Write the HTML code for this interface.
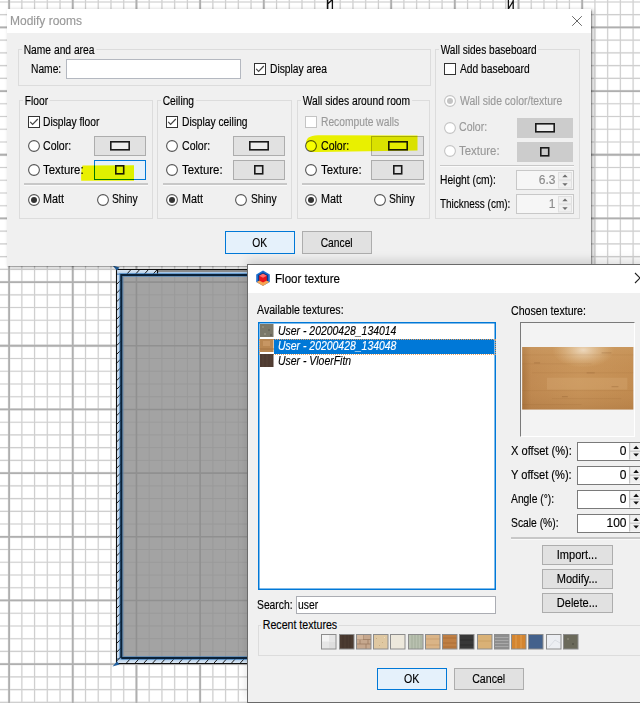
<!DOCTYPE html>
<html><head><meta charset="utf-8"><style>
html,body{margin:0;padding:0}
body{width:640px;height:703px;position:relative;overflow:hidden;background:#fff;font-family:"Liberation Sans",sans-serif;font-size:12px}
.b{position:absolute;box-sizing:content-box}
.t{-webkit-text-stroke:0.15px currentColor;position:absolute;white-space:nowrap;line-height:14px;transform-origin:0 0;font-size:12px;color:#000}
svg.b{overflow:visible}
</style></head><body>
<div class="b" style="left:0;top:0;width:640px;height:703px;"><svg width="640" height="703" viewBox="0 0 640 703" style="display:block"><path d="M21.84 0V703M34.57 0V703M47.30 0V703M60.04 0V703M85.51 0V703M98.24 0V703M110.98 0V703M123.71 0V703M149.18 0V703M161.92 0V703M174.66 0V703M187.39 0V703M212.86 0V703M225.59 0V703M238.33 0V703M251.06 0V703M276.54 0V703M289.27 0V703M302.00 0V703M314.74 0V703M340.21 0V703M352.94 0V703M365.68 0V703M378.42 0V703M403.88 0V703M416.62 0V703M429.36 0V703M442.09 0V703M467.56 0V703M480.30 0V703M493.03 0V703M505.76 0V703M531.24 0V703M543.97 0V703M556.71 0V703M569.44 0V703M594.91 0V703M607.64 0V703M620.38 0V703M633.12 0V703M0 1.93H640M0 14.66H640M0 40.13H640M0 52.87H640M0 65.60H640M0 78.34H640M0 103.81H640M0 116.54H640M0 129.28H640M0 142.01H640M0 167.48H640M0 180.22H640M0 192.96H640M0 205.69H640M0 231.16H640M0 243.90H640M0 256.63H640M0 269.36H640M0 294.83H640M0 307.57H640M0 320.30H640M0 333.04H640M0 358.51H640M0 371.24H640M0 383.98H640M0 396.71H640M0 422.18H640M0 434.92H640M0 447.65H640M0 460.39H640M0 485.86H640M0 498.59H640M0 511.33H640M0 524.06H640M0 549.53H640M0 562.27H640M0 575.00H640M0 587.74H640M0 613.21H640M0 625.94H640M0 638.68H640M0 651.41H640M0 676.88H640M0 689.62H640M0 702.35H640" stroke="#f6f6f6" stroke-width="2.0" fill="none"/><path d="M9.10 0V703M72.77 0V703M136.45 0V703M200.12 0V703M263.80 0V703M327.48 0V703M391.15 0V703M454.82 0V703M518.50 0V703M582.17 0V703M0 27.40H640M0 91.07H640M0 154.75H640M0 218.42H640M0 282.10H640M0 345.77H640M0 409.45H640M0 473.12H640M0 536.80H640M0 600.47H640M0 664.15H640" stroke="#ececec" stroke-width="2.8" fill="none"/><path d="M21.84 0V703M34.57 0V703M47.30 0V703M60.04 0V703M85.51 0V703M98.24 0V703M110.98 0V703M123.71 0V703M149.18 0V703M161.92 0V703M174.66 0V703M187.39 0V703M212.86 0V703M225.59 0V703M238.33 0V703M251.06 0V703M276.54 0V703M289.27 0V703M302.00 0V703M314.74 0V703M340.21 0V703M352.94 0V703M365.68 0V703M378.42 0V703M403.88 0V703M416.62 0V703M429.36 0V703M442.09 0V703M467.56 0V703M480.30 0V703M493.03 0V703M505.76 0V703M531.24 0V703M543.97 0V703M556.71 0V703M569.44 0V703M594.91 0V703M607.64 0V703M620.38 0V703M633.12 0V703M0 1.93H640M0 14.66H640M0 40.13H640M0 52.87H640M0 65.60H640M0 78.34H640M0 103.81H640M0 116.54H640M0 129.28H640M0 142.01H640M0 167.48H640M0 180.22H640M0 192.96H640M0 205.69H640M0 231.16H640M0 243.90H640M0 256.63H640M0 269.36H640M0 294.83H640M0 307.57H640M0 320.30H640M0 333.04H640M0 358.51H640M0 371.24H640M0 383.98H640M0 396.71H640M0 422.18H640M0 434.92H640M0 447.65H640M0 460.39H640M0 485.86H640M0 498.59H640M0 511.33H640M0 524.06H640M0 549.53H640M0 562.27H640M0 575.00H640M0 587.74H640M0 613.21H640M0 625.94H640M0 638.68H640M0 651.41H640M0 676.88H640M0 689.62H640M0 702.35H640" stroke="#cfcfcf" stroke-width="1.1" fill="none"/><path d="M9.10 0V703M72.77 0V703M136.45 0V703M200.12 0V703M263.80 0V703M327.48 0V703M391.15 0V703M454.82 0V703M518.50 0V703M582.17 0V703M0 27.40H640M0 91.07H640M0 154.75H640M0 218.42H640M0 282.10H640M0 345.77H640M0 409.45H640M0 473.12H640M0 536.80H640M0 600.47H640M0 664.15H640" stroke="#afafaf" stroke-width="1.8" fill="none"/><rect x="121" y="275" width="200" height="383" fill="#a3a3a3"/><g><path d="M123.71 275V658M149.18 275V658M161.92 275V658M174.66 275V658M187.39 275V658M212.86 275V658M225.59 275V658M238.33 275V658M251.06 275V658M276.54 275V658M289.27 275V658M302.00 275V658M314.74 275V658M121 294.83H321M121 307.57H321M121 320.30H321M121 333.04H321M121 358.51H321M121 371.24H321M121 383.98H321M121 396.71H321M121 422.18H321M121 434.92H321M121 447.65H321M121 460.39H321M121 485.86H321M121 498.59H321M121 511.33H321M121 524.06H321M121 549.53H321M121 562.27H321M121 575.00H321M121 587.74H321M121 613.21H321M121 625.94H321M121 638.68H321M121 651.41H321" stroke="#9a9a9a" stroke-width="1.0" fill="none"/><path d="M136.45 275V658M200.12 275V658M263.80 275V658M121 282.10H321M121 345.77H321M121 409.45H321M121 473.12H321M121 536.80H321M121 600.47H321" stroke="#909090" stroke-width="1.6" fill="none"/></g><defs><linearGradient id="wl" x1="0" y1="0" x2="1" y2="0"><stop offset="0" stop-color="#e2ecf6"/><stop offset="0.55" stop-color="#c0d6ec"/><stop offset="1" stop-color="#5a8cc0"/></linearGradient><linearGradient id="wb" x1="0" y1="1" x2="0" y2="0"><stop offset="0" stop-color="#e2ecf6"/><stop offset="0.55" stop-color="#c0d6ec"/><stop offset="1" stop-color="#5a8cc0"/></linearGradient><linearGradient id="wt" x1="0" y1="0" x2="0" y2="1"><stop offset="0" stop-color="#e2ecf6"/><stop offset="0.55" stop-color="#c0d6ec"/><stop offset="1" stop-color="#5a8cc0"/></linearGradient></defs><rect x="116.5" y="269.5" width="4.8" height="394" fill="url(#wl)"/><rect x="116.5" y="658" width="140.5" height="5.5" fill="url(#wb)"/><rect x="116.5" y="269.5" width="41" height="5.5" fill="url(#wt)"/><rect x="157.5" y="269.5" width="100" height="2.5" fill="#8c8c8c"/><rect x="157.5" y="272" width="100" height="2.5" fill="#a8c6e4"/><line x1="116.5" y1="284.40" x2="121.5" y2="279.40" stroke="#1a1a1a" stroke-width="1"/><line x1="116.5" y1="293.16" x2="121.5" y2="288.16" stroke="#1a1a1a" stroke-width="1"/><line x1="116.5" y1="301.92" x2="121.5" y2="296.92" stroke="#1a1a1a" stroke-width="1"/><line x1="116.5" y1="310.68" x2="121.5" y2="305.68" stroke="#1a1a1a" stroke-width="1"/><line x1="116.5" y1="319.44" x2="121.5" y2="314.44" stroke="#1a1a1a" stroke-width="1"/><line x1="116.5" y1="328.20" x2="121.5" y2="323.20" stroke="#1a1a1a" stroke-width="1"/><line x1="116.5" y1="336.96" x2="121.5" y2="331.96" stroke="#1a1a1a" stroke-width="1"/><line x1="116.5" y1="345.72" x2="121.5" y2="340.72" stroke="#1a1a1a" stroke-width="1"/><line x1="116.5" y1="354.48" x2="121.5" y2="349.48" stroke="#1a1a1a" stroke-width="1"/><line x1="116.5" y1="363.24" x2="121.5" y2="358.24" stroke="#1a1a1a" stroke-width="1"/><line x1="116.5" y1="372.00" x2="121.5" y2="367.00" stroke="#1a1a1a" stroke-width="1"/><line x1="116.5" y1="380.76" x2="121.5" y2="375.76" stroke="#1a1a1a" stroke-width="1"/><line x1="116.5" y1="389.52" x2="121.5" y2="384.52" stroke="#1a1a1a" stroke-width="1"/><line x1="116.5" y1="398.28" x2="121.5" y2="393.28" stroke="#1a1a1a" stroke-width="1"/><line x1="116.5" y1="407.04" x2="121.5" y2="402.04" stroke="#1a1a1a" stroke-width="1"/><line x1="116.5" y1="415.80" x2="121.5" y2="410.80" stroke="#1a1a1a" stroke-width="1"/><line x1="116.5" y1="424.56" x2="121.5" y2="419.56" stroke="#1a1a1a" stroke-width="1"/><line x1="116.5" y1="433.32" x2="121.5" y2="428.32" stroke="#1a1a1a" stroke-width="1"/><line x1="116.5" y1="442.08" x2="121.5" y2="437.08" stroke="#1a1a1a" stroke-width="1"/><line x1="116.5" y1="450.84" x2="121.5" y2="445.84" stroke="#1a1a1a" stroke-width="1"/><line x1="116.5" y1="459.60" x2="121.5" y2="454.60" stroke="#1a1a1a" stroke-width="1"/><line x1="116.5" y1="468.36" x2="121.5" y2="463.36" stroke="#1a1a1a" stroke-width="1"/><line x1="116.5" y1="477.12" x2="121.5" y2="472.12" stroke="#1a1a1a" stroke-width="1"/><line x1="116.5" y1="485.88" x2="121.5" y2="480.88" stroke="#1a1a1a" stroke-width="1"/><line x1="116.5" y1="494.64" x2="121.5" y2="489.64" stroke="#1a1a1a" stroke-width="1"/><line x1="116.5" y1="503.40" x2="121.5" y2="498.40" stroke="#1a1a1a" stroke-width="1"/><line x1="116.5" y1="512.16" x2="121.5" y2="507.16" stroke="#1a1a1a" stroke-width="1"/><line x1="116.5" y1="520.92" x2="121.5" y2="515.92" stroke="#1a1a1a" stroke-width="1"/><line x1="116.5" y1="529.68" x2="121.5" y2="524.68" stroke="#1a1a1a" stroke-width="1"/><line x1="116.5" y1="538.44" x2="121.5" y2="533.44" stroke="#1a1a1a" stroke-width="1"/><line x1="116.5" y1="547.20" x2="121.5" y2="542.20" stroke="#1a1a1a" stroke-width="1"/><line x1="116.5" y1="555.96" x2="121.5" y2="550.96" stroke="#1a1a1a" stroke-width="1"/><line x1="116.5" y1="564.72" x2="121.5" y2="559.72" stroke="#1a1a1a" stroke-width="1"/><line x1="116.5" y1="573.48" x2="121.5" y2="568.48" stroke="#1a1a1a" stroke-width="1"/><line x1="116.5" y1="582.24" x2="121.5" y2="577.24" stroke="#1a1a1a" stroke-width="1"/><line x1="116.5" y1="591.00" x2="121.5" y2="586.00" stroke="#1a1a1a" stroke-width="1"/><line x1="116.5" y1="599.76" x2="121.5" y2="594.76" stroke="#1a1a1a" stroke-width="1"/><line x1="116.5" y1="608.52" x2="121.5" y2="603.52" stroke="#1a1a1a" stroke-width="1"/><line x1="116.5" y1="617.28" x2="121.5" y2="612.28" stroke="#1a1a1a" stroke-width="1"/><line x1="116.5" y1="626.04" x2="121.5" y2="621.04" stroke="#1a1a1a" stroke-width="1"/><line x1="116.5" y1="634.80" x2="121.5" y2="629.80" stroke="#1a1a1a" stroke-width="1"/><line x1="116.5" y1="643.56" x2="121.5" y2="638.56" stroke="#1a1a1a" stroke-width="1"/><line x1="116.5" y1="652.32" x2="121.5" y2="647.32" stroke="#1a1a1a" stroke-width="1"/><line x1="116.5" y1="661.08" x2="121.5" y2="656.08" stroke="#1a1a1a" stroke-width="1"/><line x1="126.00" y1="663.5" x2="131.00" y2="658" stroke="#1a1a1a" stroke-width="1"/><line x1="134.76" y1="663.5" x2="139.76" y2="658" stroke="#1a1a1a" stroke-width="1"/><line x1="143.52" y1="663.5" x2="148.52" y2="658" stroke="#1a1a1a" stroke-width="1"/><line x1="152.28" y1="663.5" x2="157.28" y2="658" stroke="#1a1a1a" stroke-width="1"/><line x1="161.04" y1="663.5" x2="166.04" y2="658" stroke="#1a1a1a" stroke-width="1"/><line x1="169.80" y1="663.5" x2="174.80" y2="658" stroke="#1a1a1a" stroke-width="1"/><line x1="178.56" y1="663.5" x2="183.56" y2="658" stroke="#1a1a1a" stroke-width="1"/><line x1="187.32" y1="663.5" x2="192.32" y2="658" stroke="#1a1a1a" stroke-width="1"/><line x1="196.08" y1="663.5" x2="201.08" y2="658" stroke="#1a1a1a" stroke-width="1"/><line x1="204.84" y1="663.5" x2="209.84" y2="658" stroke="#1a1a1a" stroke-width="1"/><line x1="213.60" y1="663.5" x2="218.60" y2="658" stroke="#1a1a1a" stroke-width="1"/><line x1="222.36" y1="663.5" x2="227.36" y2="658" stroke="#1a1a1a" stroke-width="1"/><line x1="231.12" y1="663.5" x2="236.12" y2="658" stroke="#1a1a1a" stroke-width="1"/><line x1="239.88" y1="663.5" x2="244.88" y2="658" stroke="#1a1a1a" stroke-width="1"/><line x1="248.64" y1="663.5" x2="253.64" y2="658" stroke="#1a1a1a" stroke-width="1"/><line x1="126.00" y1="275" x2="131.00" y2="269.5" stroke="#1a1a1a" stroke-width="1"/><line x1="134.76" y1="275" x2="139.76" y2="269.5" stroke="#1a1a1a" stroke-width="1"/><line x1="143.52" y1="275" x2="148.52" y2="269.5" stroke="#1a1a1a" stroke-width="1"/><line x1="152.28" y1="275" x2="157.28" y2="269.5" stroke="#1a1a1a" stroke-width="1"/><path d="M116.5 663.5 V269.5 H257 M116.5 663.5 H257" fill="none" stroke="#111" stroke-width="1.1"/><line x1="157.5" y1="269.5" x2="157.5" y2="275" stroke="#111" stroke-width="1.2"/><path d="M121.3 658 V275 H257 M121.3 658 H257" fill="none" stroke="#3f80c0" stroke-width="4.2" opacity="0.6"/><path d="M121.3 658 V275 H257 M121.3 658 H257" fill="none" stroke="#0c2238" stroke-width="2"/><path d="M112.5 265.5 L119.5 267.5 L117 270.5 Z" fill="#1f5f9f"/><path d="M112.5 666.5 L119.5 664.5 L117 661.5 Z" fill="#1f5f9f"/><path d="M327.6 0 V9.5 M332.4 0 V9.5 M327.6 4 L332.4 -0.5" stroke="#111" stroke-width="1.3" fill="none"/><path d="M508.4 0 V9.5 M513.2 0 V9.5 M508.4 9 L513.2 1" stroke="#111" stroke-width="1.3" fill="none"/></svg></div>
<div class="b" style="left:6.5px;top:9.3px;width:584.5px;height:256.7px;background:#f0f0f0;box-shadow:0 0 1px 0.5px rgba(0,0,0,.22),2px 1px 4px rgba(0,0,0,.3);"></div>
<div class="b" style="left:6.5px;top:9.3px;width:584.5px;height:23.7px;background:#fff;"></div>
<div class="t" style="left:10px;top:14.00px;transform:scaleX(1.0);color:#999;">Modify rooms</div>
<svg class="b" style="left:571px;top:15px" width="12" height="12" viewBox="0 0 12 12"><path d="M1.2 1.2 L10.8 10.8 M10.8 1.2 L1.2 10.8" stroke="#6a6a6a" stroke-width="1"/></svg>
<div class="b" style="left:18px;top:49px;width:411px;height:35px;border:1px solid #dcdcdc;"></div>
<div class="t" style="left:22px;top:43.0px;background:#f0f0f0;padding:0 2px;transform:scaleX(0.855)">Name and area</div>
<div class="t" style="left:31px;top:61.50px;transform:scaleX(0.855);">Name:</div>
<div class="b" style="left:66px;top:59px;width:173px;height:17.5px;background:#fff;border:1px solid #b4b8c0;"></div>
<svg class="b" style="left:254px;top:63px" width="12" height="12" viewBox="0 0 12 12"><rect x="0.5" y="0.5" width="11" height="11" fill="#fff" stroke="#333"/><path d="M2.2 5.8 L4.6 8.3 L9.8 3" fill="none" stroke="#444" stroke-width="1.2"/></svg>
<div class="t" style="left:269.5px;top:61.50px;transform:scaleX(0.855);">Display area</div>
<div class="b" style="left:18.5px;top:100px;width:132.5px;height:117px;border:1px solid #dcdcdc;"></div>
<div class="t" style="left:22.5px;top:93.5px;background:#f0f0f0;padding:0 2px;transform:scaleX(0.855)">Floor</div>
<svg class="b" style="left:27.5px;top:115.5px" width="12" height="12" viewBox="0 0 12 12"><rect x="0.5" y="0.5" width="11" height="11" fill="#fff" stroke="#333"/><path d="M2.2 5.8 L4.6 8.3 L9.8 3" fill="none" stroke="#444" stroke-width="1.2"/></svg>
<div class="t" style="left:43.0px;top:114.50px;transform:scaleX(0.855);">Display floor</div>
<svg class="b" style="left:27.5px;top:139.5px" width="12" height="12" viewBox="0 0 12 12"><circle cx="6" cy="6" r="5.4" fill="#fff" stroke="#555" stroke-width="1.1"/></svg>
<div class="t" style="left:43.0px;top:138.50px;transform:scaleX(0.88);">Color:</div>
<div class="b" style="left:94px;top:136px;width:50px;height:17.5px;background:#e1e1e1;border:1px solid #adadad;"></div>
<svg class="b" style="left:110.00px;top:140.75px" width="20" height="10" viewBox="0 0 20 10"><rect x="0.8" y="0.8" width="18.4" height="8" fill="#ececec" stroke="#1a1a1a" stroke-width="1.6"/></svg>
<svg class="b" style="left:27.5px;top:164px" width="12" height="12" viewBox="0 0 12 12"><circle cx="6" cy="6" r="5.4" fill="#fff" stroke="#555" stroke-width="1.1"/></svg>
<div class="t" style="left:43.0px;top:163.00px;transform:scaleX(0.95);">Texture:</div>
<div class="b" style="left:94px;top:160px;width:50px;height:17.5px;background:#e5f1fb;border:1px solid #0078d7;"></div>
<svg class="b" style="left:115.00px;top:164.75px" width="10" height="10" viewBox="0 0 10 10"><rect x="0.8" y="0.8" width="7.9" height="8" fill="none" stroke="#1a1a1a" stroke-width="1.6"/></svg>
<div class="b" style="left:24.0px;top:183.3px;width:123.5px;height:1.5px;background:#c8c8c8;border-bottom:1px solid #fafafa;"></div>
<svg class="b" style="left:27.5px;top:193.5px" width="12" height="12" viewBox="0 0 12 12"><circle cx="6" cy="6" r="5.4" fill="#fff" stroke="#555" stroke-width="1.1"/><circle cx="6" cy="6" r="3" fill="#333"/></svg>
<div class="t" style="left:43.0px;top:192.00px;transform:scaleX(0.9);">Matt</div>
<svg class="b" style="left:96.5px;top:193.5px" width="12" height="12" viewBox="0 0 12 12"><circle cx="6" cy="6" r="5.4" fill="#fff" stroke="#555" stroke-width="1.1"/></svg>
<div class="t" style="left:112.0px;top:192.00px;transform:scaleX(0.855);">Shiny</div>
<div class="b" style="left:157px;top:100px;width:133px;height:117px;border:1px solid #dcdcdc;"></div>
<div class="t" style="left:161px;top:93.5px;background:#f0f0f0;padding:0 2px;transform:scaleX(0.855)">Ceiling</div>
<svg class="b" style="left:166px;top:115.5px" width="12" height="12" viewBox="0 0 12 12"><rect x="0.5" y="0.5" width="11" height="11" fill="#fff" stroke="#333"/><path d="M2.2 5.8 L4.6 8.3 L9.8 3" fill="none" stroke="#444" stroke-width="1.2"/></svg>
<div class="t" style="left:181.5px;top:114.50px;transform:scaleX(0.855);">Display ceiling</div>
<svg class="b" style="left:166px;top:139.5px" width="12" height="12" viewBox="0 0 12 12"><circle cx="6" cy="6" r="5.4" fill="#fff" stroke="#555" stroke-width="1.1"/></svg>
<div class="t" style="left:181.5px;top:138.50px;transform:scaleX(0.88);">Color:</div>
<div class="b" style="left:232.5px;top:136px;width:50.5px;height:17.5px;background:#e1e1e1;border:1px solid #adadad;"></div>
<svg class="b" style="left:248.75px;top:140.75px" width="20" height="10" viewBox="0 0 20 10"><rect x="0.8" y="0.8" width="18.4" height="8" fill="#ececec" stroke="#1a1a1a" stroke-width="1.6"/></svg>
<svg class="b" style="left:166px;top:164px" width="12" height="12" viewBox="0 0 12 12"><circle cx="6" cy="6" r="5.4" fill="#fff" stroke="#555" stroke-width="1.1"/></svg>
<div class="t" style="left:181.5px;top:163.00px;transform:scaleX(0.95);">Texture:</div>
<div class="b" style="left:232.5px;top:160px;width:50.5px;height:17.5px;background:#e1e1e1;border:1px solid #adadad;"></div>
<svg class="b" style="left:253.75px;top:164.75px" width="10" height="10" viewBox="0 0 10 10"><rect x="0.8" y="0.8" width="7.9" height="8" fill="none" stroke="#1a1a1a" stroke-width="1.6"/></svg>
<div class="b" style="left:162.5px;top:183.3px;width:124.0px;height:1.5px;background:#c8c8c8;border-bottom:1px solid #fafafa;"></div>
<svg class="b" style="left:166px;top:193.5px" width="12" height="12" viewBox="0 0 12 12"><circle cx="6" cy="6" r="5.4" fill="#fff" stroke="#555" stroke-width="1.1"/><circle cx="6" cy="6" r="3" fill="#333"/></svg>
<div class="t" style="left:181.5px;top:192.00px;transform:scaleX(0.9);">Matt</div>
<svg class="b" style="left:235px;top:193.5px" width="12" height="12" viewBox="0 0 12 12"><circle cx="6" cy="6" r="5.4" fill="#fff" stroke="#555" stroke-width="1.1"/></svg>
<div class="t" style="left:250.5px;top:192.00px;transform:scaleX(0.855);">Shiny</div>
<div class="b" style="left:296.5px;top:100px;width:131.5px;height:117px;border:1px solid #dcdcdc;"></div>
<div class="t" style="left:300.5px;top:93.5px;background:#f0f0f0;padding:0 2px;transform:scaleX(0.855)">Wall sides around room</div>
<svg class="b" style="left:305px;top:115.5px" width="12" height="12" viewBox="0 0 12 12"><rect x="0.5" y="0.5" width="11" height="11" fill="#fff" stroke="#c4c4c4"/></svg>
<div class="t" style="left:320.5px;top:114.50px;transform:scaleX(0.855);color:#999;">Recompute walls</div>
<svg class="b" style="left:305px;top:139.5px" width="12" height="12" viewBox="0 0 12 12"><circle cx="6" cy="6" r="5.4" fill="#fff" stroke="#555" stroke-width="1.1"/></svg>
<div class="t" style="left:320.5px;top:138.50px;transform:scaleX(0.88);">Color:</div>
<div class="b" style="left:371.25px;top:136px;width:50.5px;height:17.5px;background:#e1e1e1;border:1px solid #adadad;"></div>
<svg class="b" style="left:387.50px;top:140.75px" width="20" height="10" viewBox="0 0 20 10"><rect x="0.8" y="0.8" width="18.4" height="8" fill="#ececec" stroke="#1a1a1a" stroke-width="1.6"/></svg>
<svg class="b" style="left:305px;top:164px" width="12" height="12" viewBox="0 0 12 12"><circle cx="6" cy="6" r="5.4" fill="#fff" stroke="#555" stroke-width="1.1"/></svg>
<div class="t" style="left:320.5px;top:163.00px;transform:scaleX(0.95);">Texture:</div>
<div class="b" style="left:371.25px;top:160px;width:50.5px;height:17.5px;background:#e1e1e1;border:1px solid #adadad;"></div>
<svg class="b" style="left:392.50px;top:164.75px" width="10" height="10" viewBox="0 0 10 10"><rect x="0.8" y="0.8" width="7.9" height="8" fill="none" stroke="#1a1a1a" stroke-width="1.6"/></svg>
<div class="b" style="left:302.0px;top:183.3px;width:122.5px;height:1.5px;background:#c8c8c8;border-bottom:1px solid #fafafa;"></div>
<svg class="b" style="left:305px;top:193.5px" width="12" height="12" viewBox="0 0 12 12"><circle cx="6" cy="6" r="5.4" fill="#fff" stroke="#555" stroke-width="1.1"/><circle cx="6" cy="6" r="3" fill="#333"/></svg>
<div class="t" style="left:320.5px;top:192.00px;transform:scaleX(0.9);">Matt</div>
<svg class="b" style="left:373.5px;top:193.5px" width="12" height="12" viewBox="0 0 12 12"><circle cx="6" cy="6" r="5.4" fill="#fff" stroke="#555" stroke-width="1.1"/></svg>
<div class="t" style="left:389.0px;top:192.00px;transform:scaleX(0.855);">Shiny</div>
<div class="b" style="left:434.5px;top:49px;width:143.5px;height:168px;border:1px solid #dcdcdc;"></div>
<div class="t" style="left:438.5px;top:43.0px;background:#f0f0f0;padding:0 2px;transform:scaleX(0.84)">Wall sides baseboard</div>
<svg class="b" style="left:443.5px;top:62.5px" width="12" height="12" viewBox="0 0 12 12"><rect x="0.5" y="0.5" width="11" height="11" fill="#fff" stroke="#333"/></svg>
<div class="t" style="left:459.5px;top:61.50px;transform:scaleX(0.855);">Add baseboard</div>
<svg class="b" style="left:443.5px;top:94.5px" width="12" height="12" viewBox="0 0 12 12"><circle cx="6" cy="6" r="5.4" fill="#fff" stroke="#c4c4c4" stroke-width="1.1"/><circle cx="6" cy="6" r="3" fill="#c4c4c4"/></svg>
<div class="t" style="left:459.5px;top:93.50px;transform:scaleX(0.87);color:#999;">Wall side color/texture</div>
<svg class="b" style="left:443.5px;top:121.5px" width="12" height="12" viewBox="0 0 12 12"><circle cx="6" cy="6" r="5.4" fill="#fff" stroke="#c4c4c4" stroke-width="1.1"/></svg>
<div class="t" style="left:459px;top:120.00px;transform:scaleX(0.88);color:#999;">Color:</div>
<div class="b" style="left:516.5px;top:117.5px;width:54.5px;height:18px;background:#cccccc;border:1px solid #cccccc;"></div>
<svg class="b" style="left:534.75px;top:122.50px" width="20" height="10" viewBox="0 0 20 10"><rect x="0.8" y="0.8" width="18.4" height="8" fill="#ececec" stroke="#1a1a1a" stroke-width="1.6"/></svg>
<svg class="b" style="left:443.5px;top:145px" width="12" height="12" viewBox="0 0 12 12"><circle cx="6" cy="6" r="5.4" fill="#fff" stroke="#c4c4c4" stroke-width="1.1"/></svg>
<div class="t" style="left:459px;top:144.00px;transform:scaleX(0.95);color:#999;">Texture:</div>
<div class="b" style="left:516.5px;top:141.5px;width:54.5px;height:18px;background:#cccccc;border:1px solid #cccccc;"></div>
<svg class="b" style="left:539.75px;top:146.50px" width="10" height="10" viewBox="0 0 10 10"><rect x="0.8" y="0.8" width="7.9" height="8" fill="none" stroke="#1a1a1a" stroke-width="1.6"/></svg>
<div class="b" style="left:440px;top:164.8px;width:134px;height:1.5px;background:#c8c8c8;border-bottom:1px solid #fafafa;"></div>
<div class="t" style="left:440px;top:173.00px;transform:scaleX(0.855);">Height (cm):</div>
<div class="b" style="left:515.5px;top:170px;width:56.5px;height:17.5px;background:#f6f6f6;border:1px solid #c8c8c8;"></div>
<div class="t" style="left:520px;top:173px;width:35.5px;text-align:right;color:#8c8c8c;">6.3</div>
<div class="t" style="left:440px;top:197.00px;transform:scaleX(0.83);">Thickness (cm):</div>
<div class="b" style="left:515.5px;top:194px;width:56.5px;height:17.5px;background:#f6f6f6;border:1px solid #c8c8c8;"></div>
<div class="t" style="left:520px;top:197px;width:35.5px;text-align:right;color:#8c8c8c;">1</div>
<svg class="b" style="left:558px;top:171.50px" width="15" height="17" viewBox="0 0 15 17"><rect x="0.5" y="0.5" width="13" height="7.3" fill="#f0f0f0" stroke="#e0e0e0"/><rect x="0.5" y="8.7" width="13" height="7.3" fill="#f0f0f0" stroke="#e0e0e0"/><path d="M4.3 5.2 L7 2.4 L9.7 5.2 Z M4.3 11.2 L7 14 L9.7 11.2 Z" fill="#6e6e6e"/></svg>
<svg class="b" style="left:558px;top:195.50px" width="15" height="17" viewBox="0 0 15 17"><rect x="0.5" y="0.5" width="13" height="7.3" fill="#f0f0f0" stroke="#e0e0e0"/><rect x="0.5" y="8.7" width="13" height="7.3" fill="#f0f0f0" stroke="#e0e0e0"/><path d="M4.3 5.2 L7 2.4 L9.7 5.2 Z M4.3 11.2 L7 14 L9.7 11.2 Z" fill="#6e6e6e"/></svg>
<div class="b" style="left:225px;top:231px;width:68px;height:21px;background:#e5f1fb;border:1px solid #0078d7;"></div>
<div class="t" style="left:225px;top:235.5px;width:70px;text-align:center;"><span style="display:inline-block;transform:scaleX(0.855)">OK</span></div>
<div class="b" style="left:302px;top:231px;width:68px;height:21px;background:#e1e1e1;border:1px solid #adadad;"></div>
<div class="t" style="left:302px;top:235.5px;width:70px;text-align:center;"><span style="display:inline-block;transform:scaleX(0.855)">Cancel</span></div>
<svg class="b" style="left:0;top:0;mix-blend-mode:multiply" width="640" height="703" viewBox="0 0 640 703"><path d="M82.5 165.6 L134 165.2 L134 180.8 L81.2 180.8 C81 175, 81.3 168, 82.5 165.6 Z" fill="#f8ff00"/><path d="M306 144 C306 138, 309 136, 318 135.3 L417.5 135.6 L417.5 150.6 L318 152 C309 152.6, 306 151, 306 144 Z" fill="#f8ff00"/></svg>
<div class="b" style="left:247.4px;top:264.3px;width:400px;height:437.2px;background:#f0f0f0;border:1px solid #6a6a6a;box-shadow:0 -4px 9px rgba(0,0,0,.13),0 0 1px 0.5px rgba(0,0,0,.18);"></div>
<div class="b" style="left:248.4px;top:265.3px;width:400px;height:28px;background:#fff;"></div>
<svg class="b" style="left:255px;top:270px" width="16" height="17" viewBox="0 0 16 17"><path d="M8 0.6 L14.8 4.4 V12 L8 15.8 L1.2 12 V4.4 Z" fill="#1c6fd0"/><path d="M8 2.4 L13 5.1 V11.2 L8 14 L3 11.2 V5.1 Z" fill="#0a3c8c"/><path d="M1.6 12 L8 8.8 L14.4 12 L8 16 Z" fill="#f7a552"/><path d="M8 3.8 L11.8 5.8 V10.4 L8 12.6 L4.2 10.4 V5.8 Z" fill="#e8141b"/><path d="M8 3.8 L11.8 5.8 L8 7.8 L4.2 5.8 Z" fill="#ff7070"/></svg>
<div class="t" style="left:274.5px;top:272.00px;transform:scaleX(0.965);">Floor texture</div>
<svg class="b" style="left:630px;top:272px" width="12" height="12" viewBox="0 0 12 12"><path d="M5 1 L15 11 M15 1 L5 11" stroke="#222" stroke-width="1.1"/></svg>
<div class="t" style="left:257px;top:303.00px;transform:scaleX(0.885);">Available textures:</div>
<div class="b" style="left:257.5px;top:321.7px;width:236.5px;height:266.3px;background:#fff;border:1px solid #0078d7;box-shadow:inset 0 0 0 0.5px #0078d7;"></div>
<svg class="b" style="left:260.2px;top:324.30px" width="13.5" height="13" viewBox="0 0 13.5 13"><rect width="13.5" height="13" fill="#7b7869"/><rect x="2" y="2" width="2" height="2" fill="#8e8a78"/><rect x="8" y="5" width="2" height="2" fill="#6a675a"/><rect x="4" y="9" width="2" height="2" fill="#949080"/><rect x="10" y="10" width="2" height="2" fill="#66635a"/></svg>
<div class="t" style="left:277.5px;top:324.20px;transform:scaleX(0.87);font-style:italic;">User - 20200428_134014</div>
<div class="b" style="left:273.5px;top:338.5px;width:220.5px;height:15px;background:#0078d7;"></div>
<div class="b" style="left:259.3px;top:338.5px;width:234.5px;height:14px;border:1px dotted #e8a060;"></div>
<svg class="b" style="left:260.2px;top:339.30px" width="13.5" height="13" viewBox="0 0 13.5 13"><rect width="13.5" height="13" fill="#b98752"/><rect x="3" y="2" width="7" height="5" fill="#d0a070" opacity="0.6"/><path d="M0 10H14" stroke="#a07040" stroke-width="0.8"/></svg>
<div class="t" style="left:277.5px;top:339.20px;transform:scaleX(0.87);color:#fff;font-style:italic;">User - 20200428_134048</div>
<svg class="b" style="left:260.2px;top:354.30px" width="13.5" height="13" viewBox="0 0 13.5 13"><rect width="13.5" height="13" fill="#4f3b31"/><path d="M3 0V13M7 0V13M11 0V13" stroke="#5a463a" stroke-width="0.8"/></svg>
<div class="t" style="left:277.5px;top:354.20px;transform:scaleX(0.87);font-style:italic;">User - VloerFitn</div>
<div class="t" style="left:510.5px;top:303.50px;transform:scaleX(0.885);">Chosen texture:</div>
<div class="b" style="left:520px;top:322px;width:113px;height:113px;background:#f3f3f3;border-top:1.5px solid #7a7a7a;border-left:1.5px solid #7a7a7a;border-right:1px solid #fff;border-bottom:1px solid #fff;"></div>
<svg class="b" style="left:521.5px;top:347px" width="111.5" height="62.5" viewBox="0 0 112 63"><defs><linearGradient id="wg" x1="0" y1="0" x2="1" y2="0"><stop offset="0" stop-color="#ab7640"/><stop offset="0.08" stop-color="#c18b53"/><stop offset="0.5" stop-color="#c9955b"/><stop offset="1" stop-color="#c38d52"/></linearGradient><radialGradient id="wh" cx="0.55" cy="0.05" r="0.28"><stop offset="0" stop-color="#f2e2cc" stop-opacity="0.85"/><stop offset="1" stop-color="#e8c898" stop-opacity="0"/></radialGradient><linearGradient id="wv" x1="0" y1="0" x2="0" y2="1"><stop offset="0" stop-color="#d4a870" stop-opacity="0.35"/><stop offset="0.5" stop-color="#c89050" stop-opacity="0"/><stop offset="1" stop-color="#9a6430" stop-opacity="0.3"/></linearGradient></defs><rect width="112" height="63" fill="url(#wg)"/><rect width="112" height="63" fill="url(#wv)"/><rect x="25" y="31" width="81" height="12" fill="#dcb07c" opacity="0.3"/><rect width="112" height="63" fill="url(#wh)"/><path d="M0 8 H112 M0 17 H70 M10 26 H112 M0 44 H112 M30 52 H100 M0 58 H60" stroke="#8e5a28" stroke-width="0.7" opacity="0.18"/><path d="M12 16 h6 M65 26 h8 M80 6 h10 M40 50 h6 M90 40 h7" stroke="#7a4a20" stroke-width="1.2" opacity="0.22"/></svg>
<div class="t" style="left:510.5px;top:444.40px;transform:scaleX(0.925);">X offset (%):</div>
<div class="b" style="left:577px;top:442.2px;width:68px;height:16.5px;background:#fff;border:1px solid #7a7a7a;"></div>
<div class="t" style="left:580px;top:444.2px;width:46.5px;text-align:right;">0</div>
<svg class="b" style="left:628.5px;top:443.20px" width="12" height="16.5" viewBox="0 0 12 16.5"><rect x="0" y="0" width="12" height="16.5" fill="#f0f0f0"/><line x1="0.6" y1="0" x2="0.6" y2="16.5" stroke="#c4c4c4" stroke-width="1.2"/><line x1="1" y1="8.2" x2="12" y2="8.2" stroke="#c8c8c8" stroke-width="1.2"/><path d="M4.3 6 L7.1 2.8 L9.9 6 Z M4.3 10.4 L7.1 13.6 L9.9 10.4 Z" fill="#111"/></svg>
<div class="t" style="left:510.5px;top:468.40px;transform:scaleX(0.925);">Y offset (%):</div>
<div class="b" style="left:577px;top:466.2px;width:68px;height:16.5px;background:#fff;border:1px solid #7a7a7a;"></div>
<div class="t" style="left:580px;top:468.2px;width:46.5px;text-align:right;">0</div>
<svg class="b" style="left:628.5px;top:467.20px" width="12" height="16.5" viewBox="0 0 12 16.5"><rect x="0" y="0" width="12" height="16.5" fill="#f0f0f0"/><line x1="0.6" y1="0" x2="0.6" y2="16.5" stroke="#c4c4c4" stroke-width="1.2"/><line x1="1" y1="8.2" x2="12" y2="8.2" stroke="#c8c8c8" stroke-width="1.2"/><path d="M4.3 6 L7.1 2.8 L9.9 6 Z M4.3 10.4 L7.1 13.6 L9.9 10.4 Z" fill="#111"/></svg>
<div class="t" style="left:510.5px;top:492.40px;transform:scaleX(0.86);">Angle (°):</div>
<div class="b" style="left:577px;top:490.2px;width:68px;height:16.5px;background:#fff;border:1px solid #7a7a7a;"></div>
<div class="t" style="left:580px;top:492.2px;width:46.5px;text-align:right;">0</div>
<svg class="b" style="left:628.5px;top:491.20px" width="12" height="16.5" viewBox="0 0 12 16.5"><rect x="0" y="0" width="12" height="16.5" fill="#f0f0f0"/><line x1="0.6" y1="0" x2="0.6" y2="16.5" stroke="#c4c4c4" stroke-width="1.2"/><line x1="1" y1="8.2" x2="12" y2="8.2" stroke="#c8c8c8" stroke-width="1.2"/><path d="M4.3 6 L7.1 2.8 L9.9 6 Z M4.3 10.4 L7.1 13.6 L9.9 10.4 Z" fill="#111"/></svg>
<div class="t" style="left:510.5px;top:516.40px;transform:scaleX(0.86);">Scale (%):</div>
<div class="b" style="left:577px;top:514.2px;width:68px;height:16.5px;background:#fff;border:1px solid #7a7a7a;"></div>
<div class="t" style="left:580px;top:516.2px;width:46.5px;text-align:right;">100</div>
<svg class="b" style="left:628.5px;top:515.20px" width="12" height="16.5" viewBox="0 0 12 16.5"><rect x="0" y="0" width="12" height="16.5" fill="#f0f0f0"/><line x1="0.6" y1="0" x2="0.6" y2="16.5" stroke="#c4c4c4" stroke-width="1.2"/><line x1="1" y1="8.2" x2="12" y2="8.2" stroke="#c8c8c8" stroke-width="1.2"/><path d="M4.3 6 L7.1 2.8 L9.9 6 Z M4.3 10.4 L7.1 13.6 L9.9 10.4 Z" fill="#111"/></svg>
<div class="b" style="left:511px;top:537px;width:129px;height:1.5px;background:#c8c8c8;border-bottom:1px solid #fafafa;"></div>
<div class="b" style="left:541.5px;top:545px;width:69.5px;height:18px;background:#e1e1e1;border:1px solid #adadad;"></div>
<div class="t" style="left:541.5px;top:548.0px;width:71.5px;text-align:center;"><span style="display:inline-block;transform:scaleX(0.92)">Import...</span></div>
<div class="b" style="left:541.5px;top:569px;width:69.5px;height:18px;background:#e1e1e1;border:1px solid #adadad;"></div>
<div class="t" style="left:541.5px;top:572.0px;width:71.5px;text-align:center;"><span style="display:inline-block;transform:scaleX(0.92)">Modify...</span></div>
<div class="b" style="left:541.5px;top:593px;width:69.5px;height:18px;background:#e1e1e1;border:1px solid #adadad;"></div>
<div class="t" style="left:541.5px;top:596.0px;width:71.5px;text-align:center;"><span style="display:inline-block;transform:scaleX(0.92)">Delete...</span></div>
<div class="t" style="left:257px;top:597.50px;transform:scaleX(0.86);">Search:</div>
<div class="b" style="left:295.75px;top:595.5px;width:198.25px;height:16.5px;background:#fff;border:1px solid #abadb3;"></div>
<div class="t" style="left:298px;top:597.50px;transform:scaleX(0.86);">user</div>
<div class="b" style="left:257.5px;top:625px;width:400px;height:28.5px;border:1px solid #dcdcdc;"></div>
<div class="t" style="left:261px;top:618px;background:#f0f0f0;padding:0 2px;transform:scaleX(0.885)">Recent textures</div>
<svg class="b" style="left:321.25px;top:634.3px" width="15.5" height="15.5" viewBox="0 0 15.5 15.5"><rect x="0.5" y="0.5" width="14.5" height="14.5" fill="#e6e6e6"/><g transform="translate(1 1)"><rect x="0" y="0" width="7" height="6.5" fill="#f4f4f4"/><rect x="7" y="7" width="6.5" height="6.5" fill="#dedede"/></g><rect x="0.5" y="0.5" width="14.5" height="14.5" fill="none" stroke="#8c8c8c" stroke-width="1"/></svg>
<svg class="b" style="left:338.52px;top:634.3px" width="15.5" height="15.5" viewBox="0 0 15.5 15.5"><rect x="0.5" y="0.5" width="14.5" height="14.5" fill="#4b3b31"/><g transform="translate(1 1)"><path d="M3 0V14M7 0V14M10 0V14" stroke="#43342b" stroke-width="0.8"/></g><rect x="0.5" y="0.5" width="14.5" height="14.5" fill="none" stroke="#8c8c8c" stroke-width="1"/></svg>
<svg class="b" style="left:355.79px;top:634.3px" width="15.5" height="15.5" viewBox="0 0 15.5 15.5"><rect x="0.5" y="0.5" width="14.5" height="14.5" fill="#c6a88e"/><g transform="translate(1 1)"><path d="M0 4.5H14M0 9H14M6 0V4.5M3 4.5V9M9 9V14M11 4.5V9" stroke="#9c7c62" stroke-width="0.8"/><rect x="0" y="0" width="6" height="4.5" fill="#d4b89e"/></g><rect x="0.5" y="0.5" width="14.5" height="14.5" fill="none" stroke="#8c8c8c" stroke-width="1"/></svg>
<svg class="b" style="left:373.06px;top:634.3px" width="15.5" height="15.5" viewBox="0 0 15.5 15.5"><rect x="0.5" y="0.5" width="14.5" height="14.5" fill="#dfc8a2"/><g transform="translate(1 1)"><rect x="2" y="3" width="1" height="1" fill="#c8ae84"/><rect x="8" y="7" width="1" height="1" fill="#c8ae84"/><rect x="5" y="10" width="1" height="1" fill="#c8ae84"/><rect x="10" y="2" width="1" height="1" fill="#eedcbc"/></g><rect x="0.5" y="0.5" width="14.5" height="14.5" fill="none" stroke="#8c8c8c" stroke-width="1"/></svg>
<svg class="b" style="left:390.33px;top:634.3px" width="15.5" height="15.5" viewBox="0 0 15.5 15.5"><rect x="0.5" y="0.5" width="14.5" height="14.5" fill="#ede8dc"/><g transform="translate(1 1)"></g><rect x="0.5" y="0.5" width="14.5" height="14.5" fill="none" stroke="#8c8c8c" stroke-width="1"/></svg>
<svg class="b" style="left:407.60px;top:634.3px" width="15.5" height="15.5" viewBox="0 0 15.5 15.5"><rect x="0.5" y="0.5" width="14.5" height="14.5" fill="#b9c1b0"/><g transform="translate(1 1)"><path d="M3 0V14M6 0V14M9 0V14M12 0V14" stroke="#9ca693" stroke-width="0.7"/></g><rect x="0.5" y="0.5" width="14.5" height="14.5" fill="none" stroke="#8c8c8c" stroke-width="1"/></svg>
<svg class="b" style="left:424.87px;top:634.3px" width="15.5" height="15.5" viewBox="0 0 15.5 15.5"><rect x="0.5" y="0.5" width="14.5" height="14.5" fill="#dab487"/><g transform="translate(1 1)"><path d="M0 4H14M0 10H14" stroke="#c89c6a" stroke-width="0.8"/></g><rect x="0.5" y="0.5" width="14.5" height="14.5" fill="none" stroke="#8c8c8c" stroke-width="1"/></svg>
<svg class="b" style="left:442.14px;top:634.3px" width="15.5" height="15.5" viewBox="0 0 15.5 15.5"><rect x="0.5" y="0.5" width="14.5" height="14.5" fill="#bf7f44"/><g transform="translate(1 1)"><path d="M0 3H14M0 8H14M0 12H14" stroke="#a86a34" stroke-width="0.8"/></g><rect x="0.5" y="0.5" width="14.5" height="14.5" fill="none" stroke="#8c8c8c" stroke-width="1"/></svg>
<svg class="b" style="left:459.41px;top:634.3px" width="15.5" height="15.5" viewBox="0 0 15.5 15.5"><rect x="0.5" y="0.5" width="14.5" height="14.5" fill="#383838"/><g transform="translate(1 1)"><path d="M0 5H14M0 10H14" stroke="#2c2c2c" stroke-width="0.8"/></g><rect x="0.5" y="0.5" width="14.5" height="14.5" fill="none" stroke="#8c8c8c" stroke-width="1"/></svg>
<svg class="b" style="left:476.68px;top:634.3px" width="15.5" height="15.5" viewBox="0 0 15.5 15.5"><rect x="0.5" y="0.5" width="14.5" height="14.5" fill="#d9b176"/><g transform="translate(1 1)"><path d="M0 6H14" stroke="#c89e62" stroke-width="0.8"/></g><rect x="0.5" y="0.5" width="14.5" height="14.5" fill="none" stroke="#8c8c8c" stroke-width="1"/></svg>
<svg class="b" style="left:493.95px;top:634.3px" width="15.5" height="15.5" viewBox="0 0 15.5 15.5"><rect x="0.5" y="0.5" width="14.5" height="14.5" fill="#8e8e8e"/><g transform="translate(1 1)"><path d="M0 2.5H14M0 5.5H14M0 8.5H14M0 11.5H14" stroke="#b0b0b0" stroke-width="0.8"/></g><rect x="0.5" y="0.5" width="14.5" height="14.5" fill="none" stroke="#8c8c8c" stroke-width="1"/></svg>
<svg class="b" style="left:511.22px;top:634.3px" width="15.5" height="15.5" viewBox="0 0 15.5 15.5"><rect x="0.5" y="0.5" width="14.5" height="14.5" fill="#d48530"/><g transform="translate(1 1)"><path d="M4 0V14M9 0V14" stroke="#e09a48" stroke-width="1.2"/></g><rect x="0.5" y="0.5" width="14.5" height="14.5" fill="none" stroke="#8c8c8c" stroke-width="1"/></svg>
<svg class="b" style="left:528.49px;top:634.3px" width="15.5" height="15.5" viewBox="0 0 15.5 15.5"><rect x="0.5" y="0.5" width="14.5" height="14.5" fill="#43618c"/><g transform="translate(1 1)"></g><rect x="0.5" y="0.5" width="14.5" height="14.5" fill="none" stroke="#8c8c8c" stroke-width="1"/></svg>
<svg class="b" style="left:545.76px;top:634.3px" width="15.5" height="15.5" viewBox="0 0 15.5 15.5"><rect x="0.5" y="0.5" width="14.5" height="14.5" fill="#eceef2"/><g transform="translate(1 1)"><path d="M2 12L8 5L13 8" stroke="#d4d8de" stroke-width="0.8" fill="none"/></g><rect x="0.5" y="0.5" width="14.5" height="14.5" fill="none" stroke="#8c8c8c" stroke-width="1"/></svg>
<svg class="b" style="left:563.03px;top:634.3px" width="15.5" height="15.5" viewBox="0 0 15.5 15.5"><rect x="0.5" y="0.5" width="14.5" height="14.5" fill="#6b6a5b"/><g transform="translate(1 1)"><rect x="3" y="3" width="2" height="2" fill="#807e6e"/><rect x="8" y="8" width="2" height="2" fill="#5a594c"/></g><rect x="0.5" y="0.5" width="14.5" height="14.5" fill="none" stroke="#8c8c8c" stroke-width="1"/></svg>
<div class="b" style="left:377px;top:667.7px;width:68px;height:20px;background:#e5f1fb;border:1px solid #0078d7;"></div>
<div class="t" style="left:377px;top:671.7px;width:70px;text-align:center;"><span style="display:inline-block;transform:scaleX(0.885)">OK</span></div>
<div class="b" style="left:454px;top:667.7px;width:68px;height:20px;background:#e1e1e1;border:1px solid #adadad;"></div>
<div class="t" style="left:454px;top:671.7px;width:70px;text-align:center;"><span style="display:inline-block;transform:scaleX(0.885)">Cancel</span></div>
</body></html>
